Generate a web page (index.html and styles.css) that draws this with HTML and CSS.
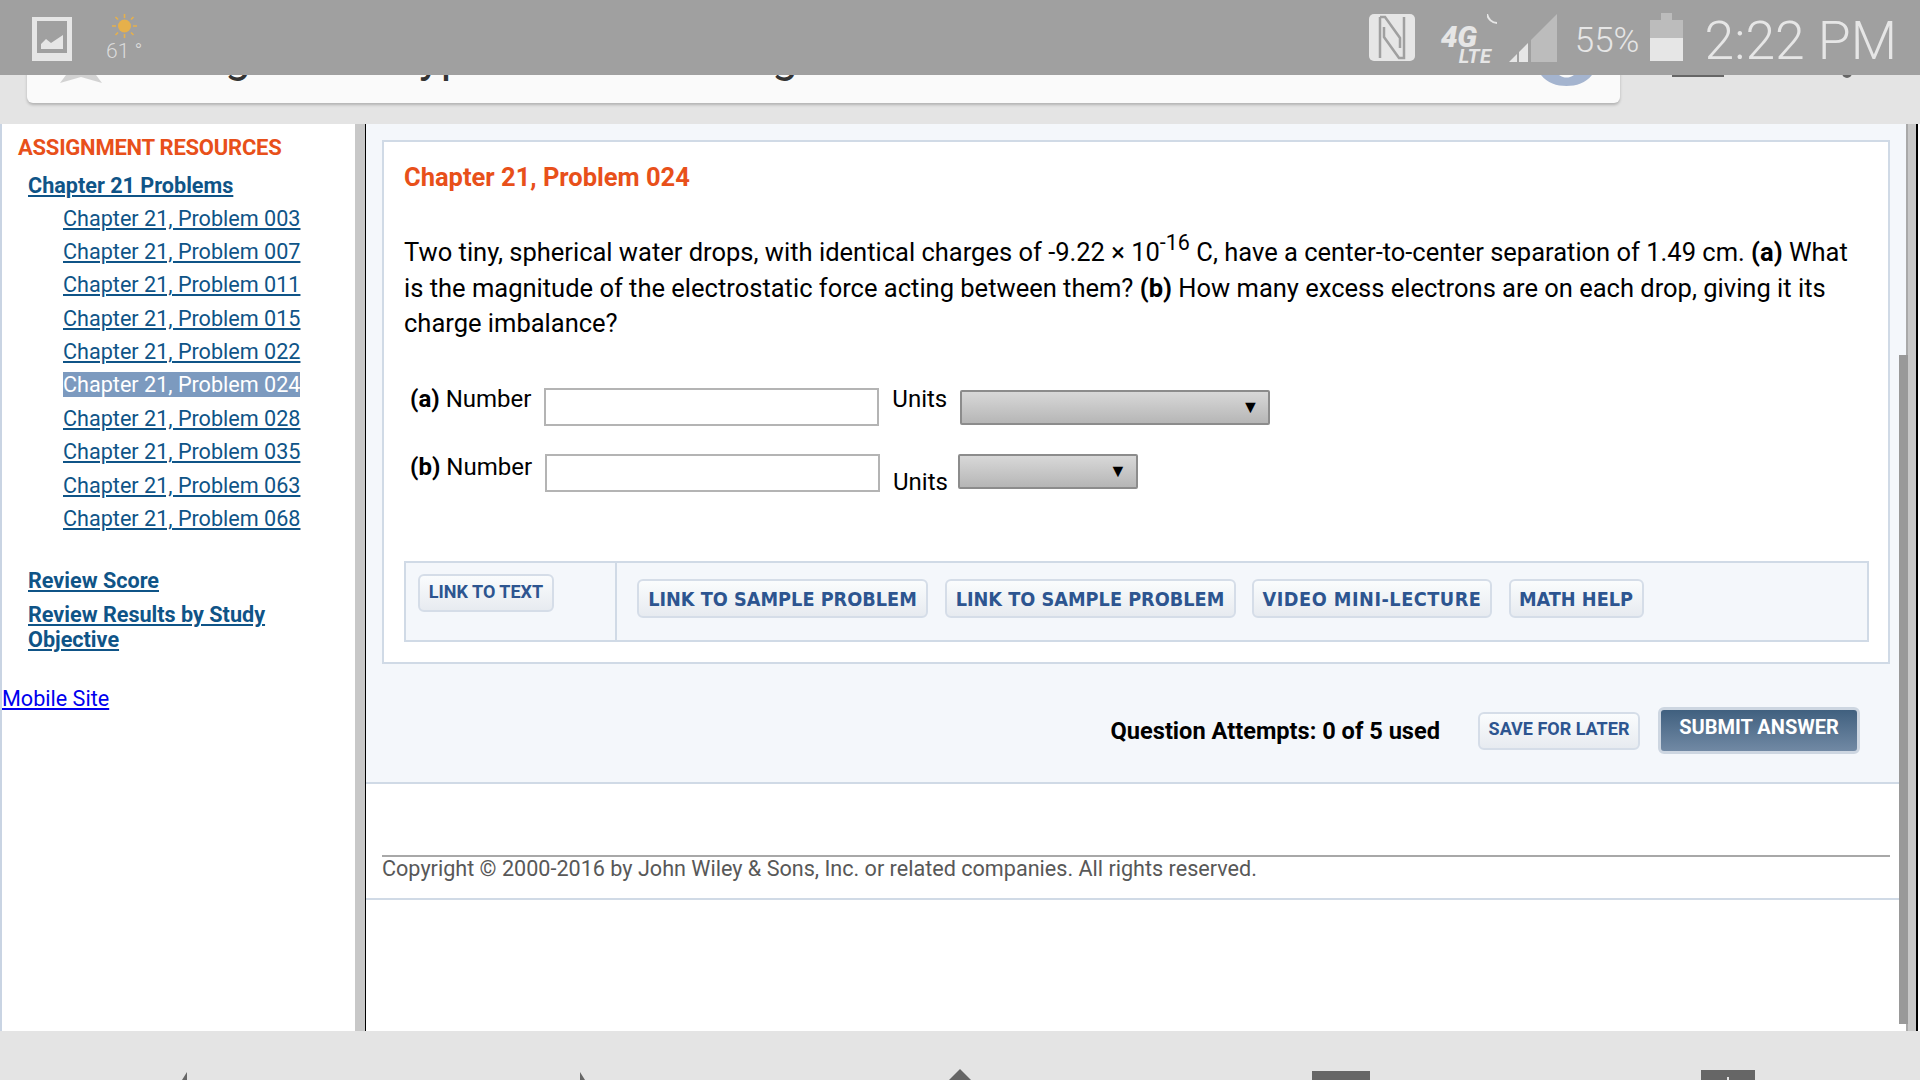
FILE: index.html
```html
<!DOCTYPE html>
<html lang="en">
<head>
<meta charset="utf-8">
<title>Chapter 21, Problem 024</title>
<link rel="stylesheet" href="styles.css">
</head>
<body>
<div class="screen">
  <header class="chrome">
    <div class="url-card">
      <svg class="star" viewBox="0 0 42 8" width="42" height="8"><path d="M0 8L6 0H36L42 8L21 2Z" fill="#d2d2d2"/></svg>
      <span class="url-text">g</span>
      <span class="url-text url-text-2">yp</span>
      <span class="url-text url-text-3">g</span>
      <svg class="reload" viewBox="0 0 51 11" width="51" height="11"><path d="M0 0C6 8 16 11 25.5 11S45 8 51 0H33C30 2 28 2.5 25.5 2.5S21 2 18 0Z" fill="#a4b4cf"/></svg>
    </div>
    <span class="tab-line"></span>
    <span class="menu-dot"></span>
  </header>
  <div class="statusbar">
    <div class="status-left">
      <svg class="pic" viewBox="0 0 40 44" width="40" height="44"><path fill="#e6e6e6" fill-rule="evenodd" d="M0 0h40v44H0zM5 4v32h30V4z"/><path fill="#e6e6e6" d="M9 32V27l5-5 5 4 12-8v14z"/></svg>
      <div class="weather">
        <svg viewBox="0 0 25 24" width="25" height="24"><g stroke="#e6b04b" stroke-width="1.6"><path d="M12.5 0v4M12.5 20v4M0 12h4M21 12h4M3.5 3l2.5 2.5M19 18.500l2.500 2.500M21.500 3L19 5.500M6 18.500L3.500 21"/></g><circle cx="12.500" cy="12" r="6.500" fill="#e6b04b"/></svg>
        <span>61 °</span>
      </div>
    </div>
    <div class="status-right">
      <svg class="nfc" viewBox="0 0 46 47" width="46" height="47"><rect width="46" height="47" rx="5" fill="#e6e6e6"/><path d="M11 3V44M11 3h5L31 24v10M35 3v41h-5L15 23V13" fill="none" stroke="#a0a0a0" stroke-width="2.500"/></svg>
      <div class="net">
        <b class="net-4g">4G</b><b class="net-lte">LTE</b>
        <svg class="net-arc" viewBox="0 0 10 10" width="10" height="10"><path d="M0 0C1 5 5 9 10 9" fill="none" stroke="#e6e6e6" stroke-width="2"/></svg>
      </div>
      <svg class="signal" viewBox="0 0 48 48" width="48" height="48"><path fill="#bcbcbc" d="M22 48V26L48 0v48z"/><path fill="#e6e6e6" d="M0 48l8-8v8zM10 48V38l9-9v19z"/></svg>
      <span class="pct">55%</span>
      <svg class="batt" viewBox="0 0 33 48" width="33" height="48"><path fill="#bcbcbc" d="M11 0h11v7h11v18H0V7h11z"/><path fill="#e6e6e6" d="M0 25h33v23H0z"/></svg>
      <span class="clock">2:22 PM</span>
    </div>
  </div>

  <div class="page">
    <aside class="sidebar">
      <h2 class="res-title">ASSIGNMENT RESOURCES</h2>
      <a class="sec-link" href="#">Chapter 21 Problems</a>
      <ul class="prob-list">
        <li><a href="#">Chapter 21, Problem 003</a></li>
        <li><a href="#">Chapter 21, Problem 007</a></li>
        <li><a href="#">Chapter 21, Problem 011</a></li>
        <li><a href="#">Chapter 21, Problem 015</a></li>
        <li><a href="#">Chapter 21, Problem 022</a></li>
        <li><a class="current" href="#">Chapter 21, Problem 024</a></li>
        <li><a href="#">Chapter 21, Problem 028</a></li>
        <li><a href="#">Chapter 21, Problem 035</a></li>
        <li><a href="#">Chapter 21, Problem 063</a></li>
        <li><a href="#">Chapter 21, Problem 068</a></li>
      </ul>
      <a class="sec-link review" href="#">Review Score</a>
      <a class="sec-link review-2" href="#">Review Results by Study Objective</a>
      <a class="mobile" href="#">Mobile Site</a>
    </aside>
    <main class="main">
      <div class="q-area">
        <section class="q-card">
          <h1 class="q-title">Chapter 21, Problem 024</h1>
          <p class="q-text">Two tiny, spherical water drops, with identical charges of -9.22 × 10<sup>-16</sup> C, have a center-to-center separation of 1.49 cm. <b>(a)</b> What is the magnitude of the electrostatic force acting between them? <b>(b)</b> How many excess electrons are on each drop, giving it its charge imbalance?</p>
          <div class="ans ans-a">
            <span class="ans-label"><b>(a)</b> Number</span>
            <span class="input"></span>
            <span class="ans-units">Units</span>
            <span class="select select-a"><i>▼</i></span>
          </div>
          <div class="ans ans-b">
            <span class="ans-label"><b>(b)</b> Number</span>
            <span class="input"></span>
            <span class="ans-units">Units</span>
            <span class="select select-b"><i>▼</i></span>
          </div>
          <div class="links">
            <div class="links-left"><a class="btn btn-text" href="#">LINK TO TEXT</a></div>
            <div class="links-right">
              <a class="btn btn-wide btn-sample" href="#">LINK TO SAMPLE PROBLEM</a>
              <a class="btn btn-wide btn-sample" href="#">LINK TO SAMPLE PROBLEM</a>
              <a class="btn btn-wide btn-video" href="#">VIDEO MINI-LECTURE</a>
              <a class="btn btn-wide btn-math" href="#">MATH HELP</a>
            </div>
          </div>
        </section>
        <div class="actions">
          <span class="attempts">Question Attempts: 0 of 5 used</span>
          <a class="btn btn-save" href="#">SAVE FOR LATER</a>
          <a class="btn-submit" href="#">SUBMIT ANSWER</a>
        </div>
      </div>
      <footer class="copy"><p>Copyright © 2000-2016 by John Wiley &amp; Sons, Inc. or related companies. All rights reserved.</p></footer>
      <div class="copy-rule"></div>
    </main>
    <div class="scroll-edge"></div>
    <span class="thumb"></span>
  </div>

  <nav class="navbar">
    <span class="nav-arrow nav-back"></span>
    <span class="nav-arrow nav-fwd"></span>
    <span class="nav-arrow nav-home"></span>
    <span class="nav-box nav-tabs"></span>
    <span class="nav-box nav-up"><i></i></span>
  </nav>
</div>
</body>
</html>
```
FILE: styles.css
```css
* { box-sizing: border-box; }
html, body { margin: 0; padding: 0; }
body { width: 1920px; height: 1080px; overflow: hidden; background: #e4e4e4; font-family: Roboto, "Liberation Sans", sans-serif; color: #000; }
.screen { position: relative; width: 1920px; height: 1080px; display: flex; flex-direction: column; }

.statusbar { position: absolute; left: 0; top: 0; width: 100%; height: 75px; background: #a0a0a0; display: flex; justify-content: space-between; padding: 0 23px 0 32px; }
.status-left { display: flex; align-items: flex-start; gap: 34px; padding-top: 17px; }
.weather { display: flex; flex-direction: column; align-items: center; color: #dcdcdc; font-size: 21px; font-weight: 300; line-height: 20px; margin-top: -3px; }
.weather span { margin-top: 3px; }
.status-right { display: flex; align-items: flex-start; }
.nfc { margin-top: 14px; }
.net { position: relative; width: 56px; height: 50px; margin: 14px 0 0 26px; font-style: italic; color: #e6e6e6; }
.net-4g { position: absolute; left: 0; top: 12px; font-size: 30px; line-height: 22px; letter-spacing: -.5px; font-weight: 900; }
.net-lte { position: absolute; left: 18px; top: 35px; font-size: 20px; line-height: 15px; letter-spacing: .5px; font-weight: 700; }
.net-arc { position: absolute; left: 46px; top: 0; }
.signal { margin: 14px 0 0 12px; }
.pct { margin-left: 18px; color: #e6e6e6; font-size: 35px; font-weight: 300; line-height: 40px; margin-top: 21px; }
.batt { margin: 13px 0 0 11px; }
.clock { margin-left: 21px; color: #e6e6e6; font-size: 53.5px; font-weight: 300; line-height: 66px; margin-top: 8px; }

.chrome { position: relative; height: 124px; flex: none; }
.url-card { position: absolute; left: 27px; top: 0; width: 1593px; height: 103px; background: #fafafa; border-radius: 0 0 6px 6px; box-shadow: 0 2px 3px rgba(0,0,0,.22); }
.star { position: absolute; left: 33px; top: 75px; }
.url-text { position: absolute; left: 198px; top: 31px; font-size: 46px; line-height: 50px; color: #333; }
.url-text-2 { left: 392px; }
.url-text-3 { left: 745px; }
.reload { position: absolute; left: 1514px; top: 75px; }
.tab-line { position: absolute; left: 1672px; top: 75px; width: 52px; height: 2px; background: #666; }
.menu-dot { position: absolute; left: 1842px; top: 72px; width: 10px; height: 6px; border-radius: 0 0 5px 5px; background: #666; }

.page { flex: none; position: relative; height: 907px; display: flex; background: #fff; }
.sidebar { flex: none; width: 355px; background: #fff; border-left: 2px solid #c9d4e3; padding: 10px 0 0 16px; display: flex; flex-direction: column; align-items: flex-start; }
.res-title { margin: 0; font-size: 22px; line-height: 28px; font-weight: 700; color: #e8501a; letter-spacing: -.24px; }
.sec-link { display: block; margin: 10px 0 0 10px; font-size: 21.6px; line-height: 28px; font-weight: 700; color: #0f5487; }
.prob-list { list-style: none; margin: 1.5px 0 0; padding: 0 0 0 45px; }
.prob-list li { height: 33.4px; line-height: 33px; font-size: 21.6px; }
.prob-list a { color: #0f5487; }
.prob-list a.current { color: #fff; background: #7c9abf; text-decoration: none; display: inline-block; line-height: 25px; height: 25px; }
.review { margin-top: 32px; }
.review-2 { margin-top: 7px; width: 280px; line-height: 25px; }
.mobile { margin: 33px 0 0 -16px; font-size: 21.6px; line-height: 28px; color: #0000ee; }

.main { flex: none; width: 1541px; margin-left: 10px; border-left: 1px solid #000; box-shadow: -10px 0 0 #c8c8c8; display: flex; flex-direction: column; background: #fff; }
.q-area { flex: none; height: 660px; background: #f4f7fb; border-bottom: 2px solid #d0dae6; padding: 16px 0 0 16px; }
.q-card { width: 1508px; height: 524px; background: #fff; border: 2px solid #d0dae6; padding: 17.5px 30px 0 20px; }
.q-title { margin: 0; font-size: 25.5px; line-height: 34px; font-weight: 700; color: #e8501a; }
.q-text { margin: 41.5px 0 0; font-size: 25.5px; line-height: 35.5px; }
.q-text sup { font-size: 21.5px; line-height: 0; vertical-align: 11px; }
.ans { display: flex; font-size: 24px; }
.ans-a { margin: 43px 0 0 6px; height: 50px; align-items: flex-start; }
.ans-b { margin: 18px 0 0 6px; height: 50px; align-items: flex-start; }
.ans-label { line-height: 28px; }
.input { width: 335px; height: 38px; background: #fff; border: 2px solid #b4b4b4; margin: 1px 0 0 13px; }
.ans-a .input { margin-top: 3px; }
.ans-units { line-height: 28px; margin-left: 13px; }
.ans-b .ans-units { margin-top: 15px; }
.select { height: 35px; border: 2px solid #8c8c8c; border-radius: 2px; background: linear-gradient(#d8d8d8, #b6b6b6); display: flex; align-items: center; justify-content: flex-end; font-size: 18px; padding-right: 9px; }
.select i { font-style: normal; }
.select-a { width: 310px; margin: 5px 0 0 13px; }
.select-b { width: 180px; margin: 1px 0 0 10px; }
.links { display: flex; width: 1465px; height: 81px; margin-top: 58px; background: #f4f7fb; border: 2px solid #d0dae6; }
.links-left { width: 211px; border-right: 2px solid #d0dae6; padding: 11px 0 0 12px; }
.links-right { display: flex; gap: 16.5px; padding: 16px 0 0 20px; }
.btn { display: inline-flex; align-items: center; justify-content: center; height: 38px; border: 2px solid #d5dde8; border-radius: 6px; background: linear-gradient(#fafcfd, #e7ebf0); color: #2d5590; font-weight: 700; text-decoration: none; white-space: nowrap; }
.btn-text { width: 136px; font-size: 18px; padding-bottom: 3px; }
.btn-wide { height: 39px; padding-top: 2px; font-family: "DejaVu Sans", sans-serif; font-stretch: condensed; font-size: 19.7px; }
.btn-sample { width: 291px; }
.btn-video { width: 240px; letter-spacing: .5px; }
.btn-math { width: 135px; }
.actions { display: flex; align-items: center; justify-content: flex-end; width: 1478px; margin-top: 43px; }
.attempts { font-weight: 700; font-size: 23.6px; margin-right: 38px; }
.btn-save { width: 162px; font-size: 18px; height: 38px; padding-bottom: 4px; }
.btn-submit { display: inline-flex; align-items: center; justify-content: center; width: 202px; height: 47px; margin-left: 18px; padding-bottom: 8px; border: 3px solid #cdd6e1; border-radius: 6px; background: linear-gradient(#40607f, #7189a4); color: #fff; font-weight: 700; font-size: 20px; text-decoration: none; }
.copy { flex: none; width: 1508px; height: 43px; margin: 71px 0 0 16px; border-top: 2px solid #a8a8a8; font-size: 21.6px; line-height: 24px; color: #585858; }
.copy p { margin: 0; }
.copy-rule { height: 2px; background: #d0dae6; }
.scroll-edge { flex: none; width: 12px; background: #c8c8c8; border-left: 2px solid #a9a9a9; border-right: 2px solid #000; }
.thumb { position: absolute; left: 1899px; top: 231px; width: 9px; height: 669px; background: #999; }

.navbar { position: relative; flex: none; height: 49px; background: #e4e4e4; overflow: hidden; }
.nav-arrow { position: absolute; top: 41px; width: 0; height: 0; border-left: 5px solid transparent; border-right: 5px solid transparent; border-bottom: 8px solid #666; }
.nav-back { left: 182px; border-right: 0; }
.nav-fwd { left: 580px; border-left: 0; }
.nav-home { left: 948px; top: 38px; border-left-width: 12px; border-right-width: 12px; border-bottom-width: 12px; }
.nav-box { position: absolute; background: #666; }
.nav-tabs { left: 1312px; top: 40px; width: 58px; height: 20px; }
.nav-up { left: 1701px; top: 39px; width: 54px; height: 20px; }
.nav-up i { display: block; width: 2px; height: 4px; margin: 7px auto 0; background: #e4e4e4; }
```
